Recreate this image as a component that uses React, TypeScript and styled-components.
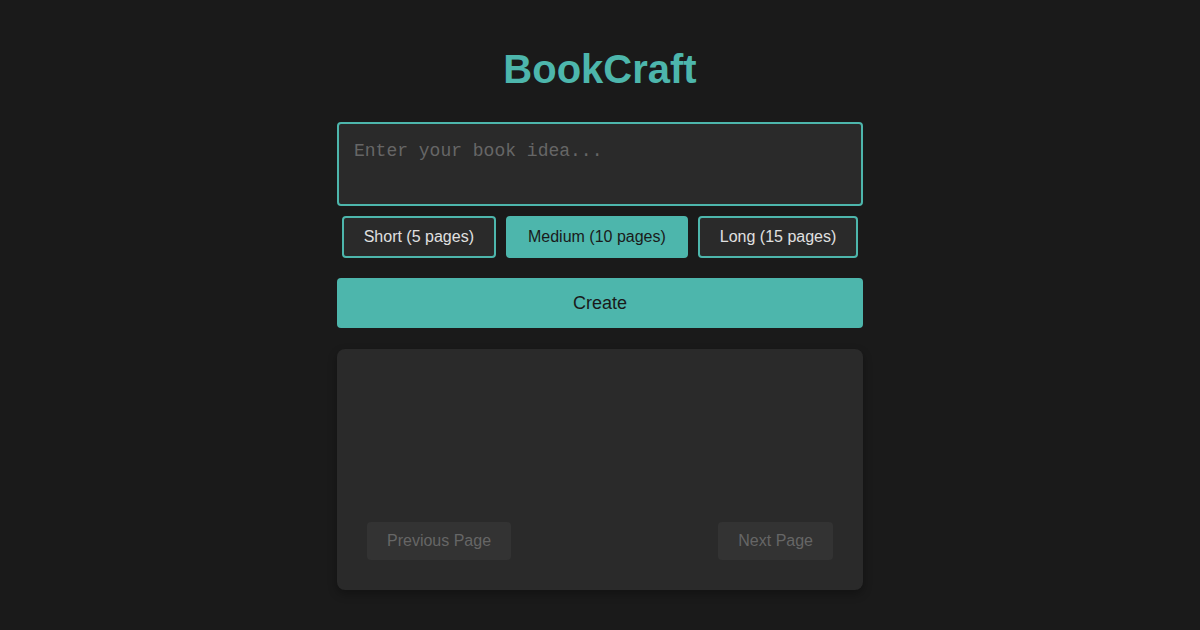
import React, { useState } from 'react';
import styled, { createGlobalStyle } from 'styled-components';

const teal = '#4db6ac';

const GlobalStyle = createGlobalStyle`
  html, body {
    margin: 0;
    padding: 0;
    background: #1a1a1a;
    color: #e0e0e0;
    font-family: 'Liberation Sans', Arial, sans-serif;
  }
`;

const Page = styled.div`
  display: flex;
  flex-direction: column;
  align-items: center;
  padding: 20px;
`;

const Container = styled.div`
  width: 526px;
  display: flex;
  flex-direction: column;
`;

const Title = styled.h1`
  margin: 26px 0 30px;
  text-align: center;
  color: ${teal};
  font-size: 40px;
  line-height: 46px;
  font-weight: bold;
`;

const IdeaInput = styled.textarea`
  box-sizing: border-box;
  width: 100%;
  height: 84px;
  padding: 17px 15px 15px;
  background: #2a2a2a;
  border: 2px solid ${teal};
  border-radius: 4px;
  color: #e0e0e0;
  font-family: 'Liberation Mono', 'Courier New', monospace;
  font-size: 18px;
  line-height: 20px;
  resize: none;
  outline: none;

  &::placeholder {
    color: #666;
  }
`;

const LengthRow = styled.div`
  display: flex;
  justify-content: center;
  margin: 10px 0 20px;
`;

const LengthButton = styled.button<{ $active: boolean }>`
  flex-shrink: 0;
  white-space: nowrap;
  margin: 0 5px;
  padding: 10px 20px;
  border: 2px solid ${teal};
  border-radius: 4px;
  background: ${(p) => (p.$active ? teal : '#2a2a2a')};
  color: ${(p) => (p.$active ? '#1a1a1a' : '#e0e0e0')};
  font-family: 'Liberation Sans', Arial, sans-serif;
  font-size: 16px;
  line-height: 18px;
  cursor: pointer;
`;

const CreateButton = styled.button`
  height: 50px;
  border: none;
  border-radius: 4px;
  background: ${teal};
  color: #1a1a1a;
  font-family: 'Liberation Sans', Arial, sans-serif;
  font-size: 18px;
  cursor: pointer;
`;

const BookPanel = styled.div`
  margin-top: 21px;
  padding: 30px;
  background: #2a2a2a;
  border-radius: 8px;
  box-shadow: 0 4px 10px rgba(0, 0, 0, 0.3);
`;

const PageContent = styled.div`
  min-height: 123px;
`;

const Nav = styled.div`
  display: flex;
  justify-content: space-between;
  margin-top: 20px;
`;

const NavButton = styled.button`
  padding: 10px 20px;
  border: none;
  border-radius: 4px;
  background: #333;
  color: #666;
  font-family: 'Liberation Sans', Arial, sans-serif;
  font-size: 16px;
  line-height: 18px;
`;

const lengths = [
  { id: 5, label: 'Short (5 pages)' },
  { id: 10, label: 'Medium (10 pages)' },
  { id: 15, label: 'Long (15 pages)' },
];

const App = () => {
  const [length, setLength] = useState(10);
  const [idea, setIdea] = useState('');

  return (
    <Page>
      <GlobalStyle />
      <Container>
        <Title>BookCraft</Title>
        <IdeaInput
          placeholder="Enter your book idea..."
          value={idea}
          onChange={(e) => setIdea(e.target.value)}
        />
        <LengthRow>
          {lengths.map((l) => (
            <LengthButton key={l.id} $active={l.id === length} onClick={() => setLength(l.id)}>
              {l.label}
            </LengthButton>
          ))}
        </LengthRow>
        <CreateButton>Create</CreateButton>
        <BookPanel>
          <PageContent />
          <Nav>
            <NavButton disabled>Previous Page</NavButton>
            <NavButton disabled>Next Page</NavButton>
          </Nav>
        </BookPanel>
      </Container>
    </Page>
  );
};

export default App;
